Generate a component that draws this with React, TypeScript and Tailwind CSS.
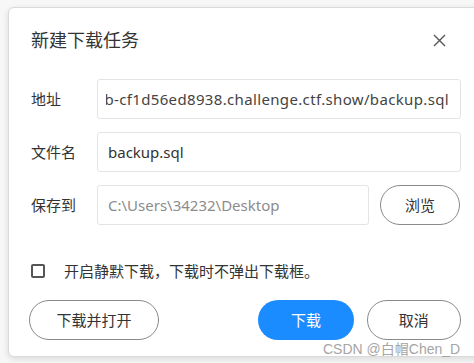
import React from 'react';

const font = { fontFamily: '"Noto Sans", "Noto Sans CJK SC", sans-serif' };

const Field: React.FC<{ label: string; children: React.ReactNode }> = ({ label, children }) => (
  <div className="flex items-center h-[40px]">
    <div className="w-[66px] shrink-0 text-[15px] text-[#333]">{label}</div>
    {children}
  </div>
);

export default function App() {
  return (
    <div className="relative w-full h-[363px] overflow-hidden bg-[#f7f7f7]" style={font}>
      <div className="ml-[8px] mt-[7px] w-[476px] h-[350px] bg-white border border-[#dadada] rounded-[6px] shadow-[0_2px_6px_rgba(0,0,0,0.12)] pl-[22px] pr-[22px] pt-[18px]">
        {/* title */}
        <div className="flex items-center justify-between h-[28px]">
          <div className="text-[18px] leading-[28px] text-[#333]">新建下载任务</div>
          <button className="mr-[15px] w-[14px] h-[14px] flex items-center justify-center">
            <svg width="13" height="13" viewBox="0 0 13 13" fill="none" stroke="#555" strokeWidth="1.4">
              <path d="M1 1L12 12M12 1L1 12" />
            </svg>
          </button>
        </div>

        {/* form */}
        <div className="mt-[25px] flex flex-col gap-[13px]">
          <Field label="地址">
            <div className="flex-1 min-w-0 h-[40px] border border-[#e4e4e4] rounded-[3px] px-[8px] flex items-center">
              <div className="flex-1 min-w-0 overflow-hidden flex justify-end whitespace-nowrap text-[15px] text-[#444] pr-[3px] tracking-[0.35px]">
                <span className="shrink-0">http://web-cf1d56ed8938.challenge.ctf.show/backup.sql</span>
              </div>
            </div>
          </Field>
          <Field label="文件名">
            <div className="flex-1 min-w-0 h-[40px] border border-[#e4e4e4] rounded-[3px] px-[10px] flex items-center text-[15px] text-[#333]">
              backup.sql
            </div>
          </Field>
          <Field label="保存到">
            <div className="w-[272px] h-[40px] border border-[#e4e4e4] rounded-[3px] px-[10px] flex items-center text-[15px] text-[#8c8c8c]">
              C:\Users\34232\Desktop
            </div>
            <button className="ml-[11px] w-[80px] h-[40px] rounded-full border border-[#8a8a8a] text-[15px] text-[#333]">
              浏览
            </button>
          </Field>
        </div>

        {/* silent download */}
        <div className="mt-[36px] h-[20px] flex items-center">
          <div className="w-[14px] h-[14px] border-2 border-[#555] rounded-[2px]" />
          <div className="ml-[19px] text-[15px] text-[#333]">开启静默下载，下载时不弹出下载框。</div>
        </div>

        {/* actions */}
        <div className="mt-[19px] flex items-center -ml-[2px]">
          <button className="w-[131px] h-[40px] rounded-full border border-[#8a8a8a] text-[15px] text-[#333]">
            下载并打开
          </button>
          <button className="ml-[99px] w-[96px] h-[40px] rounded-full bg-[#1a8cff] text-[15px] text-white">
            下载
          </button>
          <button className="ml-[13px] w-[95px] h-[40px] rounded-full border border-[#8a8a8a] text-[15px] text-[#333]">
            取消
          </button>
        </div>
      </div>

      <div
        className="absolute left-[323px] top-[341px] text-[14px] leading-[16px] text-[#a5a5a5]"
        style={{ fontFamily: '"Liberation Sans", "Noto Sans CJK SC", sans-serif' }}
      >
        CSDN @白帽Chen_D
      </div>
    </div>
  );
}
